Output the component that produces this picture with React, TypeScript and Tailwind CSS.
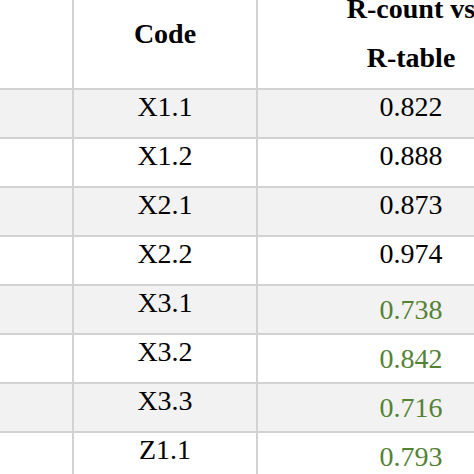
import React from "react";

const rows: { code: string; value: string; green: boolean }[] = [
  { code: "X1.1", value: "0.822", green: false },
  { code: "X1.2", value: "0.888", green: false },
  { code: "X2.1", value: "0.873", green: false },
  { code: "X2.2", value: "0.974", green: false },
  { code: "X3.1", value: "0.738", green: true },
  { code: "X3.2", value: "0.842", green: true },
  { code: "X3.3", value: "0.716", green: true },
  { code: "Z1.1", value: "0.793", green: true },
];

export default function App() {
  return (
    <div className="w-[474px] h-[474px] overflow-hidden bg-white text-black font-['Liberation_Serif','Times_New_Roman',serif]">
      <div className="w-[564px] mt-[-22px] text-[28px]">
        <div className="flex h-[112px] border-b-2 border-[#d2d2d2]">
          <div className="w-[74px] border-r-2 border-[#d2d2d2]" />
          <div className="w-[184px] border-r-2 border-[#d2d2d2] flex items-center justify-center font-bold leading-[49px]">
            Code
          </div>
          <div className="w-[306px] flex flex-col items-center justify-center font-bold leading-[49px] text-center">
            <span>R-count vs</span>
            <span>R-table</span>
          </div>
        </div>
        {rows.map((r, i) => (
          <div
            key={r.code}
            className={`flex h-[49px] border-b-2 border-[#d2d2d2] ${i % 2 === 0 ? "bg-[#f2f2f2]" : "bg-white"}`}
          >
            <div className="w-[74px] border-r-2 border-[#d2d2d2]" />
            <div className="w-[184px] border-r-2 border-[#d2d2d2] text-center leading-[33px]">
              {r.code}
            </div>
            <div
              className={`w-[306px] text-center leading-[33px] ${r.green ? "pt-[7px] text-[#548235]" : ""}`}
            >
              {r.value}
            </div>
          </div>
        ))}
      </div>
    </div>
  );
}
